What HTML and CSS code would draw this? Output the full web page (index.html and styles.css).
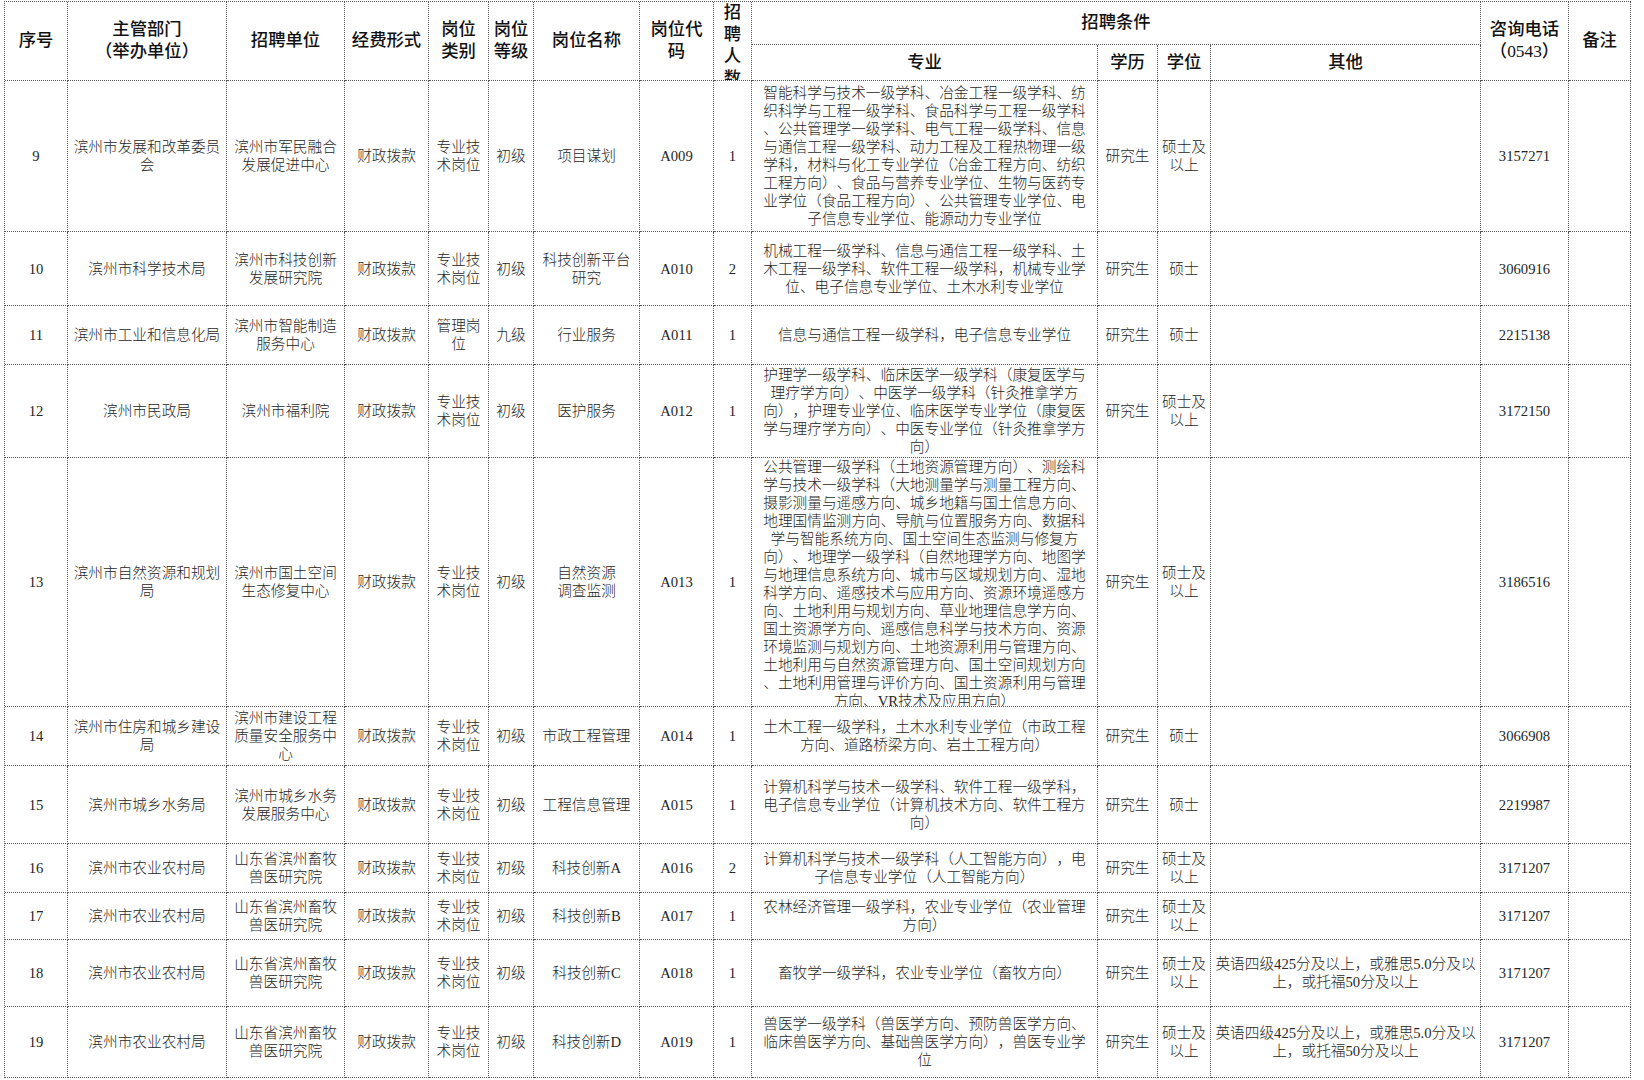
FILE: index.html
```html
<!DOCTYPE html>
<html lang="zh-CN">
<head>
<meta charset="utf-8">
<title>招聘岗位表</title>
<link rel="stylesheet" href="styles.css">
</head>
<body>
<div class="sheet">
  <div class="c h r2"><span>序号</span></div>
  <div class="c h r2"><span>主管部门<br>（举办单位）</span></div>
  <div class="c h r2"><span>招聘单位</span></div>
  <div class="c h r2"><span>经费形式</span></div>
  <div class="c h r2"><span>岗位<br>类别</span></div>
  <div class="c h r2"><span>岗位<br>等级</span></div>
  <div class="c h r2"><span>岗位名称</span></div>
  <div class="c h r2"><span>岗位代<br>码</span></div>
  <div class="c h r2"><span>招<br>聘<br>人<br>数</span></div>
  <div class="c h s4"><span>招聘条件</span></div>
  <div class="c h r2"><span>咨询电话<br>（0543）</span></div>
  <div class="c h r2"><span>备注</span></div>
  <div class="c h"><span>专业</span></div>
  <div class="c h"><span>学历</span></div>
  <div class="c h"><span>学位</span></div>
  <div class="c h"><span>其他</span></div>

  <!-- 9 -->
  <div class="c"><span>9</span></div>
  <div class="c"><span>滨州市发展和改革委员<br>会</span></div>
  <div class="c"><span>滨州市军民融合<br>发展促进中心</span></div>
  <div class="c"><span>财政拨款</span></div>
  <div class="c"><span>专业技<br>术岗位</span></div>
  <div class="c"><span>初级</span></div>
  <div class="c"><span>项目谋划</span></div>
  <div class="c"><span>A009</span></div>
  <div class="c"><span>1</span></div>
  <div class="c"><span>智能科学与技术一级学科、冶金工程一级学科、纺<br>织科学与工程一级学科、食品科学与工程一级学科<br>、公共管理学一级学科、电气工程一级学科、信息<br>与通信工程一级学科、动力工程及工程热物理一级<br>学科，材料与化工专业学位（冶金工程方向、纺织<br>工程方向）、食品与营养专业学位、生物与医药专<br>业学位（食品工程方向）、公共管理专业学位、电<br>子信息专业学位、能源动力专业学位</span></div>
  <div class="c"><span>研究生</span></div>
  <div class="c"><span>硕士及<br>以上</span></div>
  <div class="c"></div>
  <div class="c"><span>3157271</span></div>
  <div class="c"></div>

  <!-- 10 -->
  <div class="c"><span>10</span></div>
  <div class="c"><span>滨州市科学技术局</span></div>
  <div class="c"><span>滨州市科技创新<br>发展研究院</span></div>
  <div class="c"><span>财政拨款</span></div>
  <div class="c"><span>专业技<br>术岗位</span></div>
  <div class="c"><span>初级</span></div>
  <div class="c"><span>科技创新平台<br>研究</span></div>
  <div class="c"><span>A010</span></div>
  <div class="c"><span>2</span></div>
  <div class="c"><span>机械工程一级学科、信息与通信工程一级学科、土<br>木工程一级学科、软件工程一级学科，机械专业学<br>位、电子信息专业学位、土木水利专业学位</span></div>
  <div class="c"><span>研究生</span></div>
  <div class="c"><span>硕士</span></div>
  <div class="c"></div>
  <div class="c"><span>3060916</span></div>
  <div class="c"></div>

  <!-- 11 -->
  <div class="c"><span>11</span></div>
  <div class="c"><span>滨州市工业和信息化局</span></div>
  <div class="c"><span>滨州市智能制造<br>服务中心</span></div>
  <div class="c"><span>财政拨款</span></div>
  <div class="c"><span>管理岗<br>位</span></div>
  <div class="c"><span>九级</span></div>
  <div class="c"><span>行业服务</span></div>
  <div class="c"><span>A011</span></div>
  <div class="c"><span>1</span></div>
  <div class="c"><span>信息与通信工程一级学科，电子信息专业学位</span></div>
  <div class="c"><span>研究生</span></div>
  <div class="c"><span>硕士</span></div>
  <div class="c"></div>
  <div class="c"><span>2215138</span></div>
  <div class="c"></div>

  <!-- 12 -->
  <div class="c"><span>12</span></div>
  <div class="c"><span>滨州市民政局</span></div>
  <div class="c"><span>滨州市福利院</span></div>
  <div class="c"><span>财政拨款</span></div>
  <div class="c"><span>专业技<br>术岗位</span></div>
  <div class="c"><span>初级</span></div>
  <div class="c"><span>医护服务</span></div>
  <div class="c"><span>A012</span></div>
  <div class="c"><span>1</span></div>
  <div class="c"><span>护理学一级学科、临床医学一级学科（康复医学与<br>理疗学方向）、中医学一级学科（针灸推拿学方<br>向），护理专业学位、临床医学专业学位（康复医<br>学与理疗学方向）、中医专业学位（针灸推拿学方<br>向）</span></div>
  <div class="c"><span>研究生</span></div>
  <div class="c"><span>硕士及<br>以上</span></div>
  <div class="c"></div>
  <div class="c"><span>3172150</span></div>
  <div class="c"></div>

  <!-- 13 -->
  <div class="c"><span>13</span></div>
  <div class="c"><span>滨州市自然资源和规划<br>局</span></div>
  <div class="c"><span>滨州市国土空间<br>生态修复中心</span></div>
  <div class="c"><span>财政拨款</span></div>
  <div class="c"><span>专业技<br>术岗位</span></div>
  <div class="c"><span>初级</span></div>
  <div class="c"><span>自然资源<br>调查监测</span></div>
  <div class="c"><span>A013</span></div>
  <div class="c"><span>1</span></div>
  <div class="c"><span>公共管理一级学科（土地资源管理方向）、测绘科<br>学与技术一级学科（大地测量学与测量工程方向、<br>摄影测量与遥感方向、城乡地籍与国土信息方向、<br>地理国情监测方向、导航与位置服务方向、数据科<br>学与智能系统方向、国土空间生态监测与修复方<br>向）、地理学一级学科（自然地理学方向、地图学<br>与地理信息系统方向、城市与区域规划方向、湿地<br>科学方向、遥感技术与应用方向、资源环境遥感方<br>向、土地利用与规划方向、草业地理信息学方向、<br>国土资源学方向、遥感信息科学与技术方向、资源<br>环境监测与规划方向、土地资源利用与管理方向、<br>土地利用与自然资源管理方向、国土空间规划方向<br>、土地利用管理与评价方向、国土资源利用与管理<br>方向、VR技术及应用方向）</span></div>
  <div class="c"><span>研究生</span></div>
  <div class="c"><span>硕士及<br>以上</span></div>
  <div class="c"></div>
  <div class="c"><span>3186516</span></div>
  <div class="c"></div>

  <!-- 14 -->
  <div class="c"><span>14</span></div>
  <div class="c"><span>滨州市住房和城乡建设<br>局</span></div>
  <div class="c"><span>滨州市建设工程<br>质量安全服务中<br>心</span></div>
  <div class="c"><span>财政拨款</span></div>
  <div class="c"><span>专业技<br>术岗位</span></div>
  <div class="c"><span>初级</span></div>
  <div class="c"><span>市政工程管理</span></div>
  <div class="c"><span>A014</span></div>
  <div class="c"><span>1</span></div>
  <div class="c"><span>土木工程一级学科，土木水利专业学位（市政工程<br>方向、道路桥梁方向、岩土工程方向）</span></div>
  <div class="c"><span>研究生</span></div>
  <div class="c"><span>硕士</span></div>
  <div class="c"></div>
  <div class="c"><span>3066908</span></div>
  <div class="c"></div>

  <!-- 15 -->
  <div class="c"><span>15</span></div>
  <div class="c"><span>滨州市城乡水务局</span></div>
  <div class="c"><span>滨州市城乡水务<br>发展服务中心</span></div>
  <div class="c"><span>财政拨款</span></div>
  <div class="c"><span>专业技<br>术岗位</span></div>
  <div class="c"><span>初级</span></div>
  <div class="c"><span>工程信息管理</span></div>
  <div class="c"><span>A015</span></div>
  <div class="c"><span>1</span></div>
  <div class="c"><span>计算机科学与技术一级学科、软件工程一级学科，<br>电子信息专业学位（计算机技术方向、软件工程方<br>向）</span></div>
  <div class="c"><span>研究生</span></div>
  <div class="c"><span>硕士</span></div>
  <div class="c"></div>
  <div class="c"><span>2219987</span></div>
  <div class="c"></div>

  <!-- 16 -->
  <div class="c"><span>16</span></div>
  <div class="c"><span>滨州市农业农村局</span></div>
  <div class="c"><span>山东省滨州畜牧<br>兽医研究院</span></div>
  <div class="c"><span>财政拨款</span></div>
  <div class="c"><span>专业技<br>术岗位</span></div>
  <div class="c"><span>初级</span></div>
  <div class="c"><span>科技创新A</span></div>
  <div class="c"><span>A016</span></div>
  <div class="c"><span>2</span></div>
  <div class="c"><span>计算机科学与技术一级学科（人工智能方向），电<br>子信息专业学位（人工智能方向）</span></div>
  <div class="c"><span>研究生</span></div>
  <div class="c"><span>硕士及<br>以上</span></div>
  <div class="c"></div>
  <div class="c"><span>3171207</span></div>
  <div class="c"></div>

  <!-- 17 -->
  <div class="c"><span>17</span></div>
  <div class="c"><span>滨州市农业农村局</span></div>
  <div class="c"><span>山东省滨州畜牧<br>兽医研究院</span></div>
  <div class="c"><span>财政拨款</span></div>
  <div class="c"><span>专业技<br>术岗位</span></div>
  <div class="c"><span>初级</span></div>
  <div class="c"><span>科技创新B</span></div>
  <div class="c"><span>A017</span></div>
  <div class="c"><span>1</span></div>
  <div class="c"><span>农林经济管理一级学科，农业专业学位（农业管理<br>方向）</span></div>
  <div class="c"><span>研究生</span></div>
  <div class="c"><span>硕士及<br>以上</span></div>
  <div class="c"></div>
  <div class="c"><span>3171207</span></div>
  <div class="c"></div>

  <!-- 18 -->
  <div class="c"><span>18</span></div>
  <div class="c"><span>滨州市农业农村局</span></div>
  <div class="c"><span>山东省滨州畜牧<br>兽医研究院</span></div>
  <div class="c"><span>财政拨款</span></div>
  <div class="c"><span>专业技<br>术岗位</span></div>
  <div class="c"><span>初级</span></div>
  <div class="c"><span>科技创新C</span></div>
  <div class="c"><span>A018</span></div>
  <div class="c"><span>1</span></div>
  <div class="c"><span>畜牧学一级学科，农业专业学位（畜牧方向）</span></div>
  <div class="c"><span>研究生</span></div>
  <div class="c"><span>硕士及<br>以上</span></div>
  <div class="c"><span>英语四级425分及以上，或雅思5.0分及以<br>上，或托福50分及以上</span></div>
  <div class="c"><span>3171207</span></div>
  <div class="c"></div>

  <!-- 19 -->
  <div class="c"><span>19</span></div>
  <div class="c"><span>滨州市农业农村局</span></div>
  <div class="c"><span>山东省滨州畜牧<br>兽医研究院</span></div>
  <div class="c"><span>财政拨款</span></div>
  <div class="c"><span>专业技<br>术岗位</span></div>
  <div class="c"><span>初级</span></div>
  <div class="c"><span>科技创新D</span></div>
  <div class="c"><span>A019</span></div>
  <div class="c"><span>1</span></div>
  <div class="c"><span>兽医学一级学科（兽医学方向、预防兽医学方向、<br>临床兽医学方向、基础兽医学方向），兽医专业学<br>位</span></div>
  <div class="c"><span>研究生</span></div>
  <div class="c"><span>硕士及<br>以上</span></div>
  <div class="c"><span>英语四级425分及以上，或雅思5.0分及以<br>上，或托福50分及以上</span></div>
  <div class="c"><span>3171207</span></div>
  <div class="c"></div>
</div>
</body>
</html>
```

FILE: styles.css
```css
html, body {
  margin: 0;
  padding: 0;
  background: #ffffff;
}

.sheet {
  display: grid;
  grid-template-columns: 63px 159px 118px 84px 60px 45px 106px 74px 38px 346px 60px 53px 270px 88px 62px;
  grid-template-rows: 43px 36px 151px 74px 59px 93px 249px 59px 78px 49px 47px 67px 71px;
  width: max-content;
  margin: 1px 0 0 4px;
  border-top: 1px dotted #555;
  border-left: 1px dotted #555;
  font-family: "Liberation Serif", "Noto Sans CJK SC", serif;
  font-size: 14.667px;
  line-height: 18px;
  color: #262626;
  font-weight: 300;
  text-spacing-trim: space-all;
}

.c {
  display: flex;
  box-sizing: border-box;
  overflow: hidden;
  padding: 0 3px;
  border-right: 1px dotted #555;
  border-bottom: 1px dotted #555;
  text-align: center;
  white-space: nowrap;
  min-width: 0;
  min-height: 0;
}

.c > span {
  margin: auto;
}

.h {
  font-family: "Liberation Serif", "Noto Sans CJK SC", sans-serif;
  font-size: 17.333px;
  line-height: 22px;
  font-weight: 500;
  color: #111;
  padding: 0 4px;
}

.r2 {
  grid-row: span 2;
}

.s4 {
  grid-column: span 4;
}
```
